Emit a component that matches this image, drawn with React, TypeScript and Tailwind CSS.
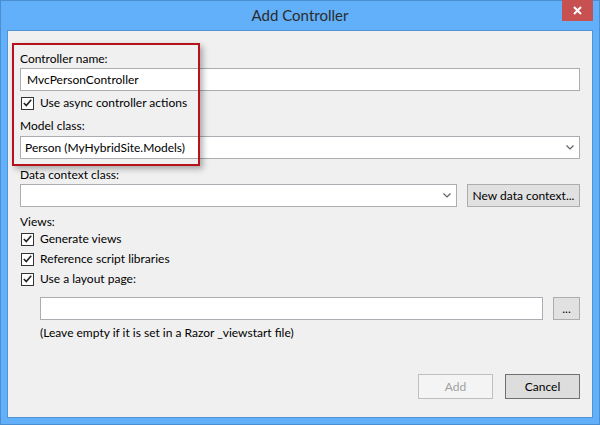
import React from 'react';

const font = { fontFamily: 'Lato, "Noto Sans", sans-serif' };

function Chevron() {
    return (
        <svg width="8" height="5" viewBox="0 0 8 5" className="shrink-0">
            <path d="M0.5 0.5 L4 4 L7.5 0.5" fill="none" stroke="#606060" strokeWidth="1.2" />
        </svg>
    );
}

function Check({ label }: { label: string }) {
    return (
        <div className="flex h-[16px] items-center">
            <div className="ml-[1px] flex h-[13px] w-[13px] items-center justify-center border border-[#333333] bg-white">
                <svg width="9" height="8" viewBox="0 0 9 8">
                    <path d="M0.8 4 L3.3 6.6 L8.2 0.8" fill="none" stroke="#222222" strokeWidth="1.6" />
                </svg>
            </div>
            <span className="ml-[6px] leading-[16px]">{label}</span>
        </div>
    );
}

function Label({ text, className = '' }: { text: string; className?: string }) {
    return <div className={`h-[16px] leading-[16px] ${className}`}>{text}</div>;
}

export default function App() {
    return (
        <div
            className="flex h-[425px] w-[600px] flex-col border border-[#4b8fd2] bg-[#62b0f9] text-[12px] text-black"
            style={font}
        >
            <div className="relative flex h-[29px] shrink-0 items-center justify-center">
                <span className="text-[15px] text-[#2b2b2b]">Add Controller</span>
                <div className="absolute right-[6px] top-[-1px] flex h-[21px] w-[31px] items-center justify-center bg-[#c75050]">
                    <svg width="9" height="9" viewBox="0 0 9 9">
                        <path d="M1 1 L8 8 M8 1 L1 8" stroke="#ffffff" strokeWidth="2" />
                    </svg>
                </div>
            </div>

            <div className="relative mx-[6px] mb-[6px] flex flex-1 flex-col border border-[#4f94d6] bg-[#f0f0f0] px-[12px] pt-[20px] pb-[18px]">
                <Label text="Controller name:" />
                <div className="mt-[1px] flex h-[23px] items-center border border-[#abadb3] bg-white px-[6px]">
                    MvcPersonController
                </div>
                <div className="mt-[4px]">
                    <Check label="Use async controller actions" />
                </div>
                <Label text="Model class:" className="mt-[7px]" />
                <div className="mt-[2px] flex h-[23px] items-center justify-between border border-[#abadb3] bg-white pl-[4px] pr-[5px]">
                    <span>Person (MyHybridSite.Models)</span>
                    <Chevron />
                </div>
                <Label text="Data context class:" className="mt-[8px]" />
                <div className="mt-[1px] flex h-[23px] gap-[10px]">
                    <div className="flex flex-1 items-center justify-end border border-[#abadb3] bg-white pr-[5px]">
                        <Chevron />
                    </div>
                    <button className="w-[113px] border border-[#adadad] bg-[#e1e1e1] text-black">
                        New data context...
                    </button>
                </div>
                <Label text="Views:" className="mt-[7px]" />
                <div className="mt-[1px] flex flex-col gap-[4px]">
                    <Check label="Generate views" />
                    <Check label="Reference script libraries" />
                    <Check label="Use a layout page:" />
                </div>
                <div className="mt-[10px] ml-[20px] flex h-[23px] gap-[10px]">
                    <div className="flex-1 border border-[#abadb3] bg-white" />
                    <button className="w-[27px] border border-[#adadad] bg-[#e1e1e1] leading-[14px]">...</button>
                </div>
                <Label text="(Leave empty if it is set in a Razor _viewstart file)" className="mt-[5px] ml-[20px]" />

                <div className="mt-auto flex justify-end gap-[12px]">
                    <button className="h-[25px] w-[75px] border border-[#bfbfbf] bg-[#f4f4f4] text-[#a0a0a0]">Add</button>
                    <button className="h-[25px] w-[75px] border border-[#707070] bg-[#dddddd]">Cancel</button>
                </div>

                <div className="pointer-events-none absolute left-[4px] top-[12px] h-[123px] w-[188px] border-2 border-[#b5121b] shadow-[3px_3px_6px_rgba(0,0,0,0.3)]" />
            </div>
        </div>
    );
}
